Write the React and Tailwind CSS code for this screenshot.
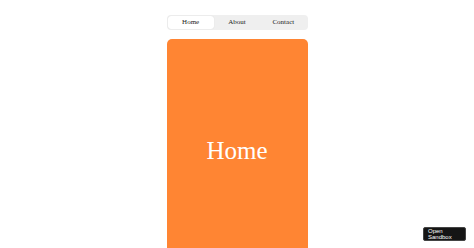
import React, { useState } from "react";

export default function App() {
  const [active, setActive] = useState("Home");
  const tabs = ["Home", "About", "Contact"];
  return (
    <div className="relative w-full h-screen bg-white overflow-hidden" style={{ fontFamily: '"Liberation Serif", serif' }}>
      <div className="flex flex-col items-center pt-[15px]">
        <div className="w-[141px] h-[15px] bg-[#efefef] rounded-[4px] p-px flex">
          {tabs.map((t) => (
            <button
              key={t}
              onClick={() => setActive(t)}
              className={
                "flex-1 flex items-center justify-center text-[7px] leading-none text-[#222] rounded-[3px] " +
                (active === t ? "bg-white shadow-[0_0_1px_rgba(0,0,0,0.15)]" : "")
              }
            >
              {t}
            </button>
          ))}
        </div>
        <div className="mt-[9px] w-[141px] h-[222px] bg-[#ff8533] rounded-[5px] flex items-center justify-center">
          <span className="text-white text-[25px] leading-none">{active}</span>
        </div>
      </div>
      <div
        className="fixed left-[423px] top-[227px] w-[43px] h-[14px] bg-[#151515] border border-[#444] rounded-[2px] px-[4px] flex flex-col justify-center text-white text-[6px] leading-[6px]"
        style={{ fontFamily: '"Liberation Sans", sans-serif' }}
      >
        <span>Open</span>
        <span>Sandbox</span>
      </div>
    </div>
  );
}
